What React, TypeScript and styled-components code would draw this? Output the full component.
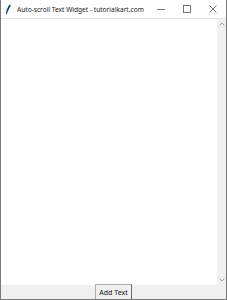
import React from "react";
import styled, { createGlobalStyle } from "styled-components";

const Global = createGlobalStyle`
  html, body { margin: 0; padding: 0; background: #ffffff; }
  body { font-family: "Noto Sans", "Liberation Sans", sans-serif; }
  #root { width: 227px; height: 300px; }
`;

const Window = styled.div`
  width: 227px;
  height: 300px;
  box-sizing: border-box;
  border: 1px solid #7a7a7a;
  border-top: none;
  display: flex;
  flex-direction: column;
  background: #f0f0f0;
`;

const TitleBar = styled.div`
  height: 18px;
  flex: 0 0 18px;
  background: #ffffff;
  display: flex;
  align-items: center;
  padding-left: 4px;
`;

const Title = styled.span`
  font-size: 6.6px;
  color: #1a1a1a;
  margin-left: 6px;
  white-space: nowrap;
  font-family: "Noto Sans", sans-serif;
`;

const Spacer = styled.div`
  flex: 1;
`;

const CtrlButton = styled.div`
  width: 26px;
  flex: 0 0 26px;
  height: 18px;
  display: flex;
  align-items: center;
  justify-content: center;
`;

const Body = styled.div`
  flex: 1;
  display: flex;
  min-height: 0;
  border-top: 1px solid #e3e3e3;
`;

const TextArea = styled.div`
  flex: 1;
  background: #ffffff;
`;

const ScrollBar = styled.div`
  width: 9px;
  background: #f0f0f0;
  display: flex;
  flex-direction: column;
  justify-content: space-between;
  align-items: center;
  padding: 3px 0;
`;

const Footer = styled.div`
  height: 14px;
  flex: 0 0 14px;
  display: flex;
  justify-content: center;
  align-items: flex-end;
`;

const Button = styled.div`
  height: 15px;
  margin-top: -1px;
  box-sizing: border-box;
  padding: 0 3px;
  border: 1px solid #adadad;
  border-right-color: #696969;
  border-bottom: none;
  background: #f0f0f0;
  font-size: 7px;
  color: #111;
  display: flex;
  align-items: center;
  font-family: "Noto Sans", sans-serif;
`;

const Feather = () => (
  <svg width="6" height="11" viewBox="0 0 6 11">
    <path d="M5.6 0.3 C3.8 1.2 1.8 4 0.8 9.8 L1.6 10.4 C2.6 7.2 4.6 4 5.8 1.2 Z" fill="#1f3b73" />
  </svg>
);

const Arrow = ({ up }: { up?: boolean }) => (
  <svg width="6" height="4" viewBox="0 0 6 4">
    <path d={up ? "M0.5 3.5 L3 1 L5.5 3.5" : "M0.5 0.5 L3 3 L5.5 0.5"} fill="none" stroke="#a0a0a0" strokeWidth="1" />
  </svg>
);

export default function App() {
  return (
    <>
      <Global />
      <Window>
        <TitleBar>
          <Feather />
          <Title>Auto-scroll Text Widget - tutorialkart.com</Title>
          <Spacer />
          <CtrlButton>
            <svg width="8" height="8" viewBox="0 0 8 8">
              <path d="M0 4.5 H8" stroke="#555" strokeWidth="0.8" />
            </svg>
          </CtrlButton>
          <CtrlButton>
            <svg width="8" height="8" viewBox="0 0 8 8">
              <rect x="0.5" y="0.5" width="7" height="7" fill="none" stroke="#555" strokeWidth="0.8" />
            </svg>
          </CtrlButton>
          <CtrlButton>
            <svg width="8" height="8" viewBox="0 0 8 8">
              <path d="M0.5 0.5 L7.5 7.5 M7.5 0.5 L0.5 7.5" stroke="#555" strokeWidth="0.8" />
            </svg>
          </CtrlButton>
        </TitleBar>
        <Body>
          <TextArea />
          <ScrollBar>
            <Arrow up />
            <Arrow />
          </ScrollBar>
        </Body>
        <Footer>
          <Button>Add Text</Button>
        </Footer>
      </Window>
    </>
  );
}
